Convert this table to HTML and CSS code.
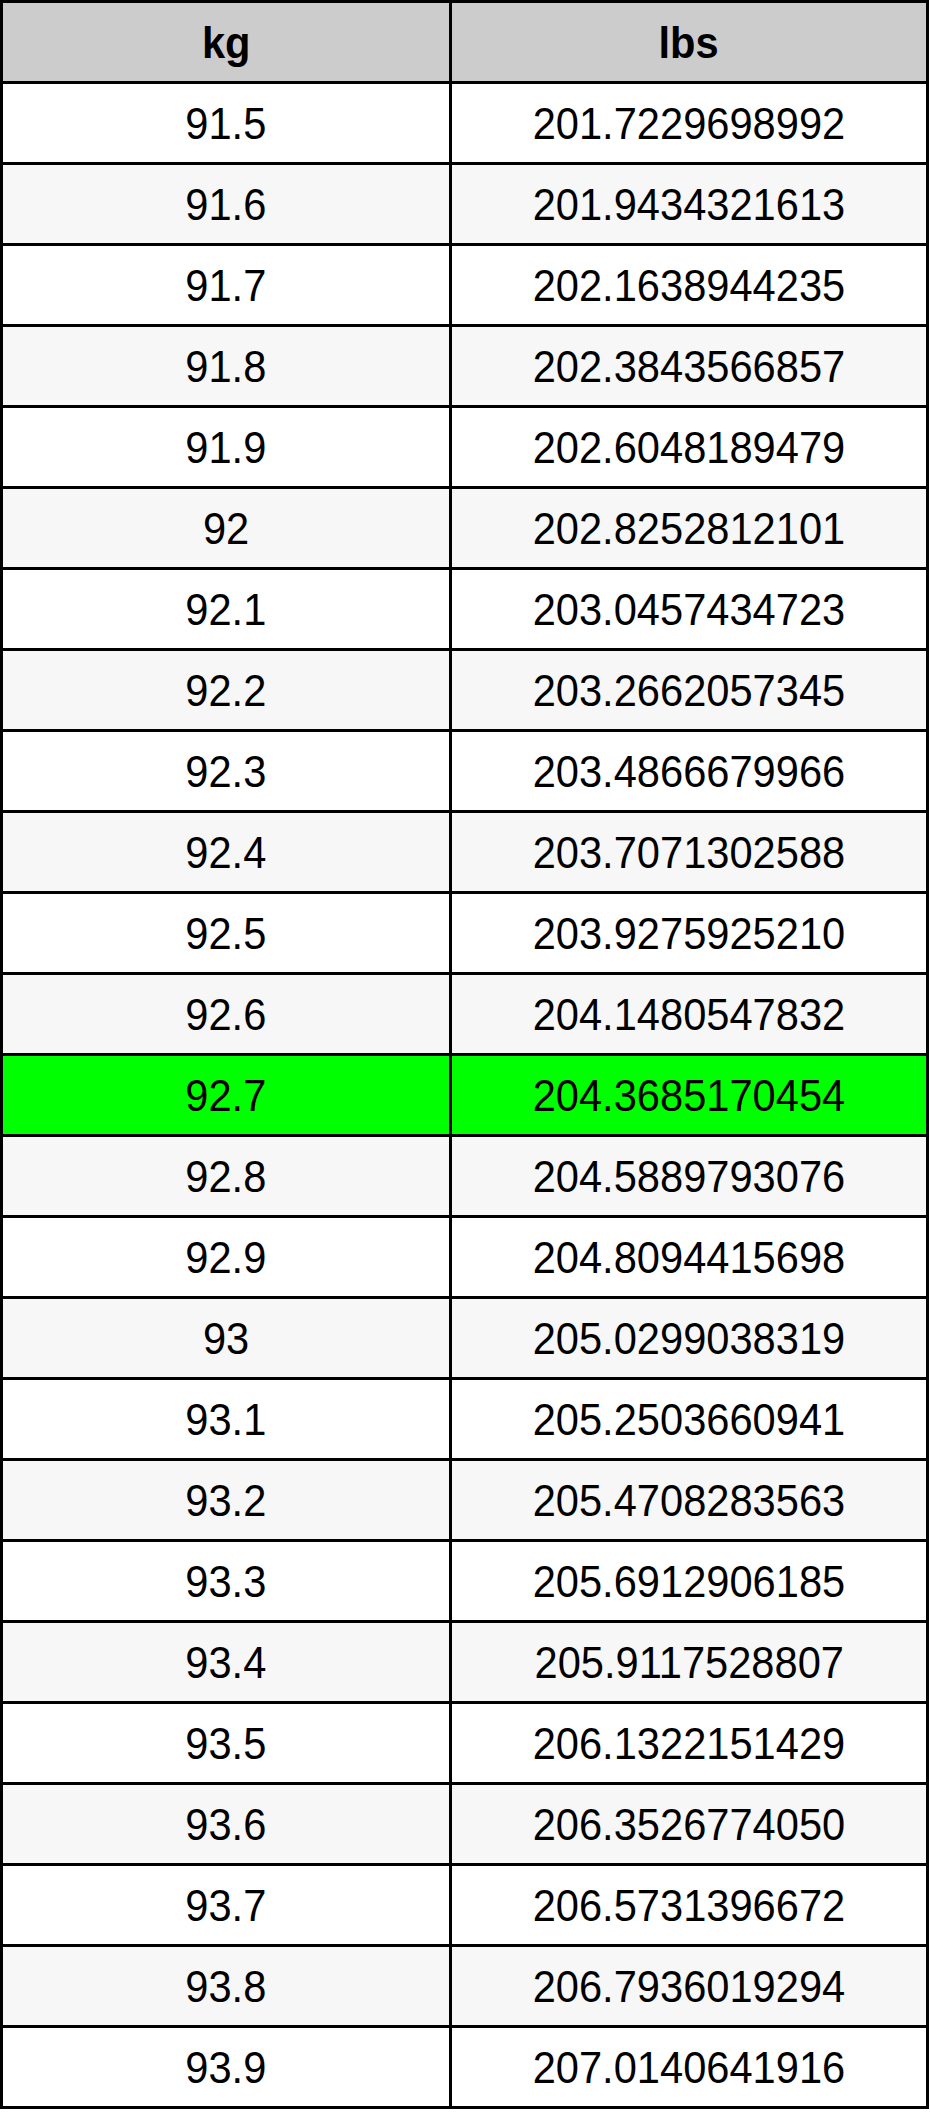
FILE: index.html
```html
<!DOCTYPE html>
<html lang="en">
<head>
<meta charset="utf-8">
<title>kg to lbs</title>
<link rel="stylesheet" href="styles.css">
</head>
<body>
<table class="conv">
<thead>
<tr><th class="c1"><span class="t">kg</span></th><th class="c2"><span class="t">lbs</span></th></tr>
</thead>
<tbody>
<tr><td><span class="t">91.5</span></td><td><span class="t">201.7229698992</span></td></tr>
<tr><td><span class="t">91.6</span></td><td><span class="t">201.9434321613</span></td></tr>
<tr><td><span class="t">91.7</span></td><td><span class="t">202.1638944235</span></td></tr>
<tr><td><span class="t">91.8</span></td><td><span class="t">202.3843566857</span></td></tr>
<tr><td><span class="t">91.9</span></td><td><span class="t">202.6048189479</span></td></tr>
<tr><td><span class="t">92</span></td><td><span class="t">202.8252812101</span></td></tr>
<tr><td><span class="t">92.1</span></td><td><span class="t">203.0457434723</span></td></tr>
<tr><td><span class="t">92.2</span></td><td><span class="t">203.2662057345</span></td></tr>
<tr><td><span class="t">92.3</span></td><td><span class="t">203.4866679966</span></td></tr>
<tr><td><span class="t">92.4</span></td><td><span class="t">203.7071302588</span></td></tr>
<tr><td><span class="t">92.5</span></td><td><span class="t">203.9275925210</span></td></tr>
<tr><td><span class="t">92.6</span></td><td><span class="t">204.1480547832</span></td></tr>
<tr class="hl"><td><span class="t">92.7</span></td><td><span class="t">204.3685170454</span></td></tr>
<tr><td><span class="t">92.8</span></td><td><span class="t">204.5889793076</span></td></tr>
<tr><td><span class="t">92.9</span></td><td><span class="t">204.8094415698</span></td></tr>
<tr><td><span class="t">93</span></td><td><span class="t">205.0299038319</span></td></tr>
<tr><td><span class="t">93.1</span></td><td><span class="t">205.2503660941</span></td></tr>
<tr><td><span class="t">93.2</span></td><td><span class="t">205.4708283563</span></td></tr>
<tr><td><span class="t">93.3</span></td><td><span class="t">205.6912906185</span></td></tr>
<tr><td><span class="t">93.4</span></td><td><span class="t">205.9117528807</span></td></tr>
<tr><td><span class="t">93.5</span></td><td><span class="t">206.1322151429</span></td></tr>
<tr><td><span class="t">93.6</span></td><td><span class="t">206.3526774050</span></td></tr>
<tr><td><span class="t">93.7</span></td><td><span class="t">206.5731396672</span></td></tr>
<tr><td><span class="t">93.8</span></td><td><span class="t">206.7936019294</span></td></tr>
<tr><td><span class="t">93.9</span></td><td><span class="t">207.0140641916</span></td></tr>
</tbody>
</table>
</body>
</html>
```
FILE: styles.css
```css
html, body {
  margin: 0;
  padding: 0;
  background: #ffffff;
}

.conv {
  border-collapse: separate;
  border-spacing: 0;
  border-top: 3px solid #000;
  border-left: 3px solid #000;
  width: 929px;
  table-layout: fixed;
  font-family: "Liberation Sans", Arial, sans-serif;
  font-size: 45px;
  color: #000;
}

.conv th,
.conv td {
  border-right: 3px solid #000;
  border-bottom: 3px solid #000;
  height: 78px;
  padding: 0;
  text-align: center;
  vertical-align: middle;
  line-height: 1;
}

.conv .t {
  display: inline-block;
  transform: scaleX(0.925);
}

.conv .c1 {
  width: 446px;
}

.conv .c2 {
  width: 474px;
}

.conv th {
  background: #cccccc;
  font-weight: bold;
}

.conv tbody tr:nth-child(odd) td {
  background: #ffffff;
}

.conv tbody tr:nth-child(even) td {
  background: #f7f7f7;
}

.conv tbody tr.hl td {
  background: #00ff00;
}
```
